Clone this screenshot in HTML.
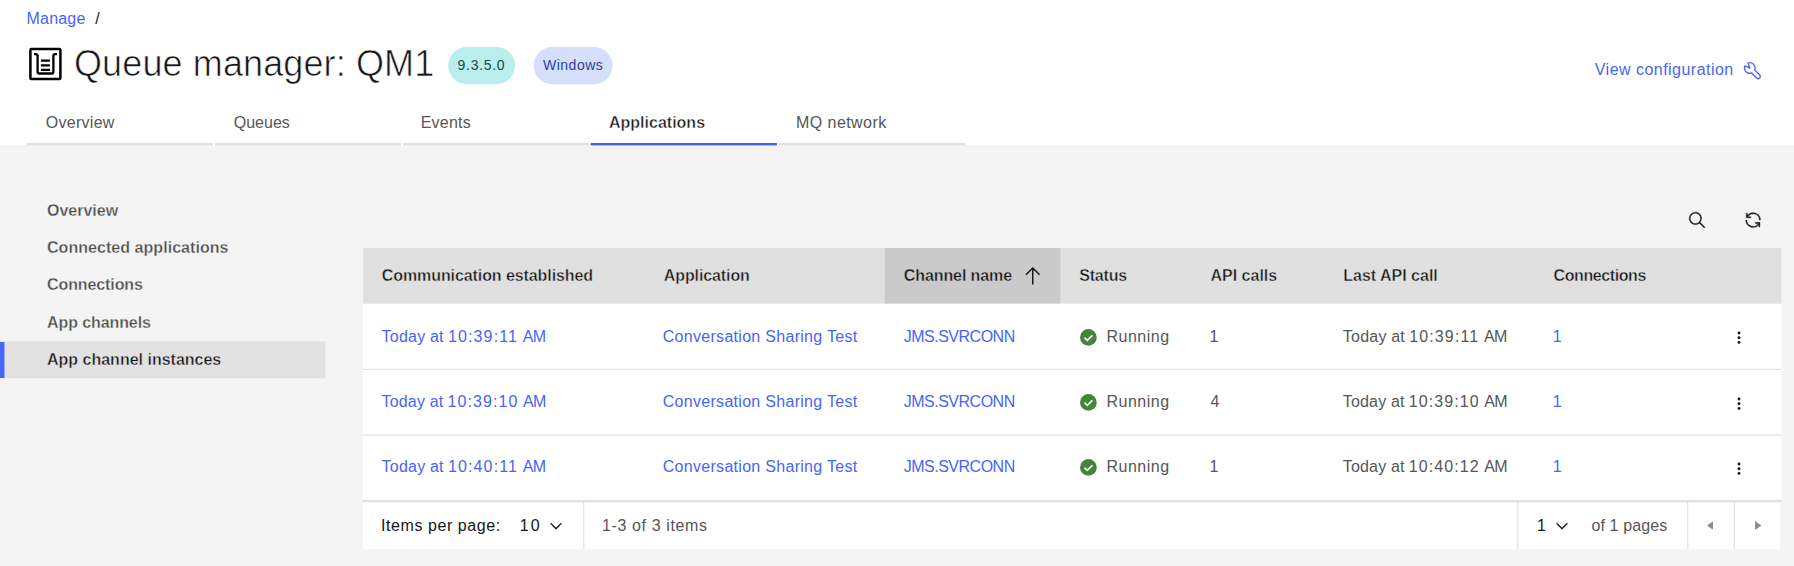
<!DOCTYPE html>
<html lang="en">
<head>
<meta charset="utf-8">
<title>Queue manager: QM1</title>
<style>
*{box-sizing:border-box;margin:0;padding:0}
html,body{width:1794px;height:566px;overflow:hidden;background:#f4f4f4}
body{font-family:"Liberation Sans",sans-serif;font-size:16px;color:#161616;position:relative}
.t{position:absolute;white-space:nowrap;line-height:20px;height:20px;font-size:16px;font-weight:normal;display:block;text-decoration:none}
#title{line-height:44px;height:44px;-webkit-text-stroke:0.65px #fff;paint-order:fill stroke}
.abs{position:absolute}
#bg{position:absolute;left:0;top:0}
</style>
</head>
<body>
<svg id="bg" width="1794" height="566" viewBox="0 0 1794 566">
  <rect x="0" y="0" width="1794" height="145.4" fill="#fff"/>
  <!-- tabs underline -->
  <rect x="27" y="143" width="186" height="2.4" fill="#e0e0e0"/>
  <rect x="215" y="143" width="186" height="2.4" fill="#e0e0e0"/>
  <rect x="403" y="143" width="186" height="2.4" fill="#e0e0e0"/>
  <rect x="590.6" y="143" width="186.3" height="2.4" fill="#4060f5"/>
  <rect x="778.5" y="143" width="186.5" height="2.4" fill="#e0e0e0"/>
  <!-- tags -->
  <rect x="448.2" y="47" width="66.8" height="37.2" rx="18.6" fill="#b9eeec"/>
  <rect x="533.7" y="47" width="78.8" height="37.2" rx="18.6" fill="#d5defb"/>
  <!-- nav selected -->
  <rect x="0" y="341.4" width="325.5" height="36.9" fill="#e2e2e2"/>
  <rect x="0" y="342" width="4.4" height="36" fill="#4666f8"/>
  <!-- table -->
  <rect x="363" y="248" width="1418.4" height="56" fill="#e0e0e0"/>
  <rect x="885" y="248" width="175.4" height="56" fill="#cacaca"/>
  <rect x="363" y="303.7" width="1418.4" height="198" fill="#fff"/>
  <rect x="363" y="501" width="1417.2" height="48.3" fill="#fff"/>
  <rect x="363" y="368.8" width="1418.4" height="1.2" fill="#e0e0e0"/>
  <rect x="363" y="434.4" width="1418.4" height="1.2" fill="#e0e0e0"/>
  <rect x="363" y="500" width="1418.4" height="2.3" fill="#e0e0e0"/>
  <rect x="583.2" y="502" width="1.2" height="47.2" fill="#e0e0e0"/>
  <rect x="1517.2" y="502" width="1.2" height="47.2" fill="#e0e0e0"/>
  <rect x="1687.2" y="502" width="1.2" height="47.2" fill="#e0e0e0"/>
  <rect x="1733.7" y="502" width="1.2" height="47.2" fill="#e0e0e0"/>
</svg>

<!-- queue manager icon -->
<svg class="abs" style="left:28px;top:46px" width="36" height="36" viewBox="0 0 36 36" fill="none" stroke="#000">
  <rect x="2.4" y="3.1" width="30" height="30" rx="1.2" stroke-width="2.5"/>
  <path d="M6 8.1h1.8a1.8 1.8 0 0 1 1.8 1.8v15.8a1.8 1.8 0 0 0 1.8 1.8h12.2a1.8 1.8 0 0 0 1.8-1.8V9.9a1.8 1.8 0 0 1 1.8-1.8h1.8" stroke-width="2.3"/>
  <path d="M12.9 14.7h9M12.9 19.3h9M12.9 23.9h9" stroke-width="2.3"/>
</svg>

<!-- wrench -->
<svg class="abs" style="left:1743px;top:61px" width="19" height="19" viewBox="0 0 19 19" fill="none" stroke="#4666f8" stroke-width="1.35" stroke-linejoin="round">
  <path d="M4.84 2.08A5.3 5.3 0 0 1 11.73 8.96L16.69 14.02A2.1 2.1 0 0 1 13.72 16.99L8.76 11.93A5.3 5.3 0 0 1 1.94 4.89L5.9 6.6Q7.7 7.8 6.45 5.75Z"/>
</svg>

<!-- toolbar icons -->
<svg class="abs" style="left:1688.1px;top:210.6px" width="18.2" height="18.2" viewBox="0 0 16 16" fill="#161616" stroke="#161616" stroke-width="0.35"><path d="M15,14.3L10.7,10c1.9-2.300000000000001,1.6-5.8-0.7-7.7S4.2,0.7,2.3,3S0.7,8.8,3,10.7c2,1.7,5,1.7,7,0l4.3,4.3L15,14.3z M2,6.5C2,4,4,2,6.5,2S11,4,11,6.5S9,11,6.5,11S2,9,2,6.5z"/></svg>
<svg class="abs" style="left:1744.1px;top:210.6px" width="18.2" height="18.2" viewBox="0 0 32 32" fill="#161616" stroke="#161616" stroke-width="0.7"><path d="M12 10H6.78A11 11 0 0127 16h2A13 13 0 006 7.68V4H4v8h8zM20 22h5.22A11 11 0 015 16H3a13 13 0 0023 8.32V28h2V20H20z"/></svg>

<!-- sort arrow -->
<svg class="abs" style="left:1021.1px;top:264.3px" width="23.5" height="23.5" viewBox="0 0 32 32" fill="#161616"><path d="M16 4L6 14 7.41 15.41 15 7.83 15 28 17 28 17 7.83 24.59 15.41 26 14 16 4z"/></svg>

<svg class="abs" style="left:1079.9px;top:328.75px" width="17" height="17" viewBox="0 0 17 17"><circle cx="8.4" cy="8.45" r="8.35" fill="#45853b"/><path d="M4.5 8.6L7.3 11.4 12.4 6.3" fill="none" stroke="#fff" stroke-width="1.65"/></svg>
<svg class="abs" style="left:1737.2px;top:331.40px" width="4" height="14" viewBox="0 0 4 14" fill="#161616"><circle cx="2" cy="2" r="1.45"/><circle cx="2" cy="6.7" r="1.45"/><circle cx="2" cy="11.4" r="1.45"/></svg>
<svg class="abs" style="left:1079.9px;top:394.00px" width="17" height="17" viewBox="0 0 17 17"><circle cx="8.4" cy="8.45" r="8.35" fill="#45853b"/><path d="M4.5 8.6L7.3 11.4 12.4 6.3" fill="none" stroke="#fff" stroke-width="1.65"/></svg>
<svg class="abs" style="left:1737.2px;top:396.65px" width="4" height="14" viewBox="0 0 4 14" fill="#161616"><circle cx="2" cy="2" r="1.45"/><circle cx="2" cy="6.7" r="1.45"/><circle cx="2" cy="11.4" r="1.45"/></svg>
<svg class="abs" style="left:1079.9px;top:459.25px" width="17" height="17" viewBox="0 0 17 17"><circle cx="8.4" cy="8.45" r="8.35" fill="#45853b"/><path d="M4.5 8.6L7.3 11.4 12.4 6.3" fill="none" stroke="#fff" stroke-width="1.65"/></svg>
<svg class="abs" style="left:1737.2px;top:461.90px" width="4" height="14" viewBox="0 0 4 14" fill="#161616"><circle cx="2" cy="2" r="1.45"/><circle cx="2" cy="6.7" r="1.45"/><circle cx="2" cy="11.4" r="1.45"/></svg>


<!-- pagination icons -->
<svg class="abs" style="left:547.25px;top:516.8px" width="18" height="18" viewBox="0 0 16 16" fill="#161616" stroke="#161616" stroke-width="0.3"><path d="M8 11L3 6 3.7 5.3 8 9.6 12.3 5.3 13 6z"/></svg>
<svg class="abs" style="left:1552.6px;top:516.8px" width="18" height="18" viewBox="0 0 16 16" fill="#161616" stroke="#161616" stroke-width="0.3"><path d="M8 11L3 6 3.7 5.3 8 9.6 12.3 5.3 13 6z"/></svg>
<svg class="abs" style="left:1707.1px;top:521.4px" width="6.3" height="9" viewBox="0 0 6.3 9" fill="#8d8d8d"><path d="M6.3 0v9L0 4.5z"/></svg>
<svg class="abs" style="left:1754.9px;top:521.4px" width="6.3" height="9" viewBox="0 0 6.3 9" fill="#8d8d8d"><path d="M0 0v9l6.3-4.5z"/></svg>

<header>
<a class="t" id="bc1" style="left:26.50px;top:9.00px;letter-spacing:0.200px;color:#4666f8;">Manage</a>
<div class="t" id="bc2" style="left:95.25px;top:9.00px;letter-spacing:0.000px;">/</div>
<h1 class="t" id="title" style="left:74.00px;top:41.75px;letter-spacing:0.118px;font-size:36px;">Queue manager: QM1</h1>
<div class="t" id="tag1" style="left:457.60px;top:54.50px;letter-spacing:0.700px;font-size:14px;color:#21474a;">9.3.5.0</div>
<div class="t" id="tag2" style="left:543.00px;top:54.50px;letter-spacing:0.500px;font-size:14px;color:#2f3f9c;">Windows</div>
<a class="t" id="vc" style="left:1594.75px;top:60.00px;letter-spacing:0.472px;color:#4666f8;">View configuration</a>
<div class="t" id="tab1" style="left:45.75px;top:113.00px;letter-spacing:0.284px;color:#565656;">Overview</div>
<div class="t" id="tab2" style="left:233.75px;top:113.00px;letter-spacing:0.000px;color:#565656;">Queues</div>
<div class="t" id="tab3" style="left:420.75px;top:113.00px;letter-spacing:0.200px;color:#565656;">Events</div>
<div class="t" id="tab4" style="left:609.00px;top:113.00px;letter-spacing:0.002px;font-weight:bold;-webkit-text-stroke:0.4px #fff;">Applications</div>
<div class="t" id="tab5" style="left:796.00px;top:113.00px;letter-spacing:0.444px;color:#565656;">MQ network</div>
</header>
<nav>
<div class="t" id="nav1" style="left:47.00px;top:201.00px;letter-spacing:-0.002px;font-weight:bold;color:#4d4d4d;-webkit-text-stroke:0.3px #f4f4f4;">Overview</div>
<div class="t" id="nav2" style="left:47.00px;top:238.00px;letter-spacing:0.047px;font-weight:bold;color:#4d4d4d;-webkit-text-stroke:0.3px #f4f4f4;">Connected applications</div>
<div class="t" id="nav3" style="left:47.00px;top:275.00px;letter-spacing:-0.100px;font-weight:bold;color:#4d4d4d;-webkit-text-stroke:0.3px #f4f4f4;">Connections</div>
<div class="t" id="nav4" style="left:47.00px;top:313.00px;letter-spacing:-0.089px;font-weight:bold;color:#4d4d4d;-webkit-text-stroke:0.3px #f4f4f4;">App channels</div>
<div class="t" id="nav5" style="left:47.00px;top:350.00px;letter-spacing:-0.000px;font-weight:bold;-webkit-text-stroke:0.4px #e2e2e2;">App channel instances</div>
</nav>
<main>
<section class="thead">
<div class="t" id="th1" style="left:381.75px;top:266.00px;letter-spacing:-0.083px;font-weight:bold;-webkit-text-stroke:0.4px #e0e0e0;">Communication established</div>
<div class="t" id="th2" style="left:663.75px;top:266.00px;letter-spacing:-0.100px;font-weight:bold;-webkit-text-stroke:0.4px #e0e0e0;">Application</div>
<div class="t" id="th3" style="left:903.75px;top:266.00px;letter-spacing:-0.089px;font-weight:bold;-webkit-text-stroke:0.4px #cacaca;">Channel name</div>
<div class="t" id="th4" style="left:1079.25px;top:266.00px;letter-spacing:-0.200px;font-weight:bold;-webkit-text-stroke:0.4px #e0e0e0;">Status</div>
<div class="t" id="th5" style="left:1210.50px;top:266.00px;letter-spacing:0.001px;font-weight:bold;-webkit-text-stroke:0.4px #e0e0e0;">API calls</div>
<div class="t" id="th6" style="left:1343.25px;top:266.00px;letter-spacing:-0.002px;font-weight:bold;-webkit-text-stroke:0.4px #e0e0e0;">Last API call</div>
<div class="t" id="th7" style="left:1553.50px;top:266.00px;letter-spacing:-0.400px;font-weight:bold;-webkit-text-stroke:0.4px #e0e0e0;">Connections</div>
</section>
<section class="tbody">
<a class="t" id="r1a" style="left:381.60px;top:327.00px;letter-spacing:0.509px;color:#4666f8;"><span style="letter-spacing:0.209px">Today at</span><span style="letter-spacing:-0.291px"> </span><span style="letter-spacing:1.139px">10:39:11</span><span style="letter-spacing:0.079px"> </span><span style="letter-spacing:-0.591px">AM</span></a>
<a class="t" id="r1b" style="left:662.75px;top:327.00px;letter-spacing:0.293px;color:#4666f8;">Conversation Sharing Test</a>
<a class="t" id="r1c" style="left:903.75px;top:327.00px;letter-spacing:-0.500px;color:#4666f8;">JMS.SVRCONN</a>
<div class="t" id="r1d" style="left:1106.50px;top:327.00px;letter-spacing:0.501px;color:#565656;">Running</div>
<div class="t" id="r1e" style="left:1209.50px;top:327.00px;letter-spacing:0.000px;color:#565656;">1</div>
<div class="t" id="r1f" style="left:1342.85px;top:327.00px;letter-spacing:0.510px;color:#565656;"><span style="letter-spacing:0.210px">Today at</span><span style="letter-spacing:-0.290px"> </span><span style="letter-spacing:1.140px">10:39:11</span><span style="letter-spacing:0.080px"> </span><span style="letter-spacing:-0.590px">AM</span></div>
<a class="t" id="r1g" style="left:1552.75px;top:327.00px;letter-spacing:0.000px;color:#4666f8;">1</a>
<a class="t" id="r2a" style="left:381.60px;top:392.00px;letter-spacing:0.456px;color:#4666f8;"><span style="letter-spacing:0.156px">Today at</span><span style="letter-spacing:-0.344px"> </span><span style="letter-spacing:1.086px">10:39:10</span><span style="letter-spacing:0.026px"> </span><span style="letter-spacing:-0.644px">AM</span></a>
<a class="t" id="r2b" style="left:662.75px;top:392.00px;letter-spacing:0.293px;color:#4666f8;">Conversation Sharing Test</a>
<a class="t" id="r2c" style="left:903.75px;top:392.00px;letter-spacing:-0.500px;color:#4666f8;">JMS.SVRCONN</a>
<div class="t" id="r2d" style="left:1106.50px;top:392.00px;letter-spacing:0.501px;color:#565656;">Running</div>
<div class="t" id="r2e" style="left:1210.50px;top:392.00px;letter-spacing:0.000px;color:#565656;">4</div>
<div class="t" id="r2f" style="left:1342.85px;top:392.00px;letter-spacing:0.457px;color:#565656;"><span style="letter-spacing:0.157px">Today at</span><span style="letter-spacing:-0.343px"> </span><span style="letter-spacing:1.087px">10:39:10</span><span style="letter-spacing:0.027px"> </span><span style="letter-spacing:-0.643px">AM</span></div>
<a class="t" id="r2g" style="left:1552.75px;top:392.00px;letter-spacing:0.000px;color:#4666f8;">1</a>
<a class="t" id="r3a" style="left:381.60px;top:457.00px;letter-spacing:0.509px;color:#4666f8;"><span style="letter-spacing:0.209px">Today at</span><span style="letter-spacing:-0.291px"> </span><span style="letter-spacing:1.139px">10:40:11</span><span style="letter-spacing:0.079px"> </span><span style="letter-spacing:-0.591px">AM</span></a>
<a class="t" id="r3b" style="left:662.75px;top:457.00px;letter-spacing:0.293px;color:#4666f8;">Conversation Sharing Test</a>
<a class="t" id="r3c" style="left:903.75px;top:457.00px;letter-spacing:-0.500px;color:#4666f8;">JMS.SVRCONN</a>
<div class="t" id="r3d" style="left:1106.50px;top:457.00px;letter-spacing:0.501px;color:#565656;">Running</div>
<div class="t" id="r3e" style="left:1209.50px;top:457.00px;letter-spacing:0.000px;color:#565656;">1</div>
<div class="t" id="r3f" style="left:1342.85px;top:457.00px;letter-spacing:0.457px;color:#565656;"><span style="letter-spacing:0.157px">Today at</span><span style="letter-spacing:-0.343px"> </span><span style="letter-spacing:1.087px">10:40:12</span><span style="letter-spacing:0.027px"> </span><span style="letter-spacing:-0.643px">AM</span></div>
<a class="t" id="r3g" style="left:1552.75px;top:457.00px;letter-spacing:0.000px;color:#4666f8;">1</a>
</section>
<footer>
<div class="t" id="pg1" style="left:381.00px;top:516.00px;letter-spacing:0.572px;">Items per page:</div>
<div class="t" id="pg2" style="left:519.75px;top:516.00px;letter-spacing:2.000px;">10</div>
<div class="t" id="pg3" style="left:602.00px;top:516.00px;letter-spacing:0.615px;color:#565656;">1-3 of 3 items</div>
<div class="t" id="pg4" style="left:1537.00px;top:516.00px;letter-spacing:0.000px;">1</div>
<div class="t" id="pg5" style="left:1591.50px;top:516.00px;letter-spacing:0.109px;color:#565656;">of 1 pages</div>
</footer>
</main>
</body>
</html>
